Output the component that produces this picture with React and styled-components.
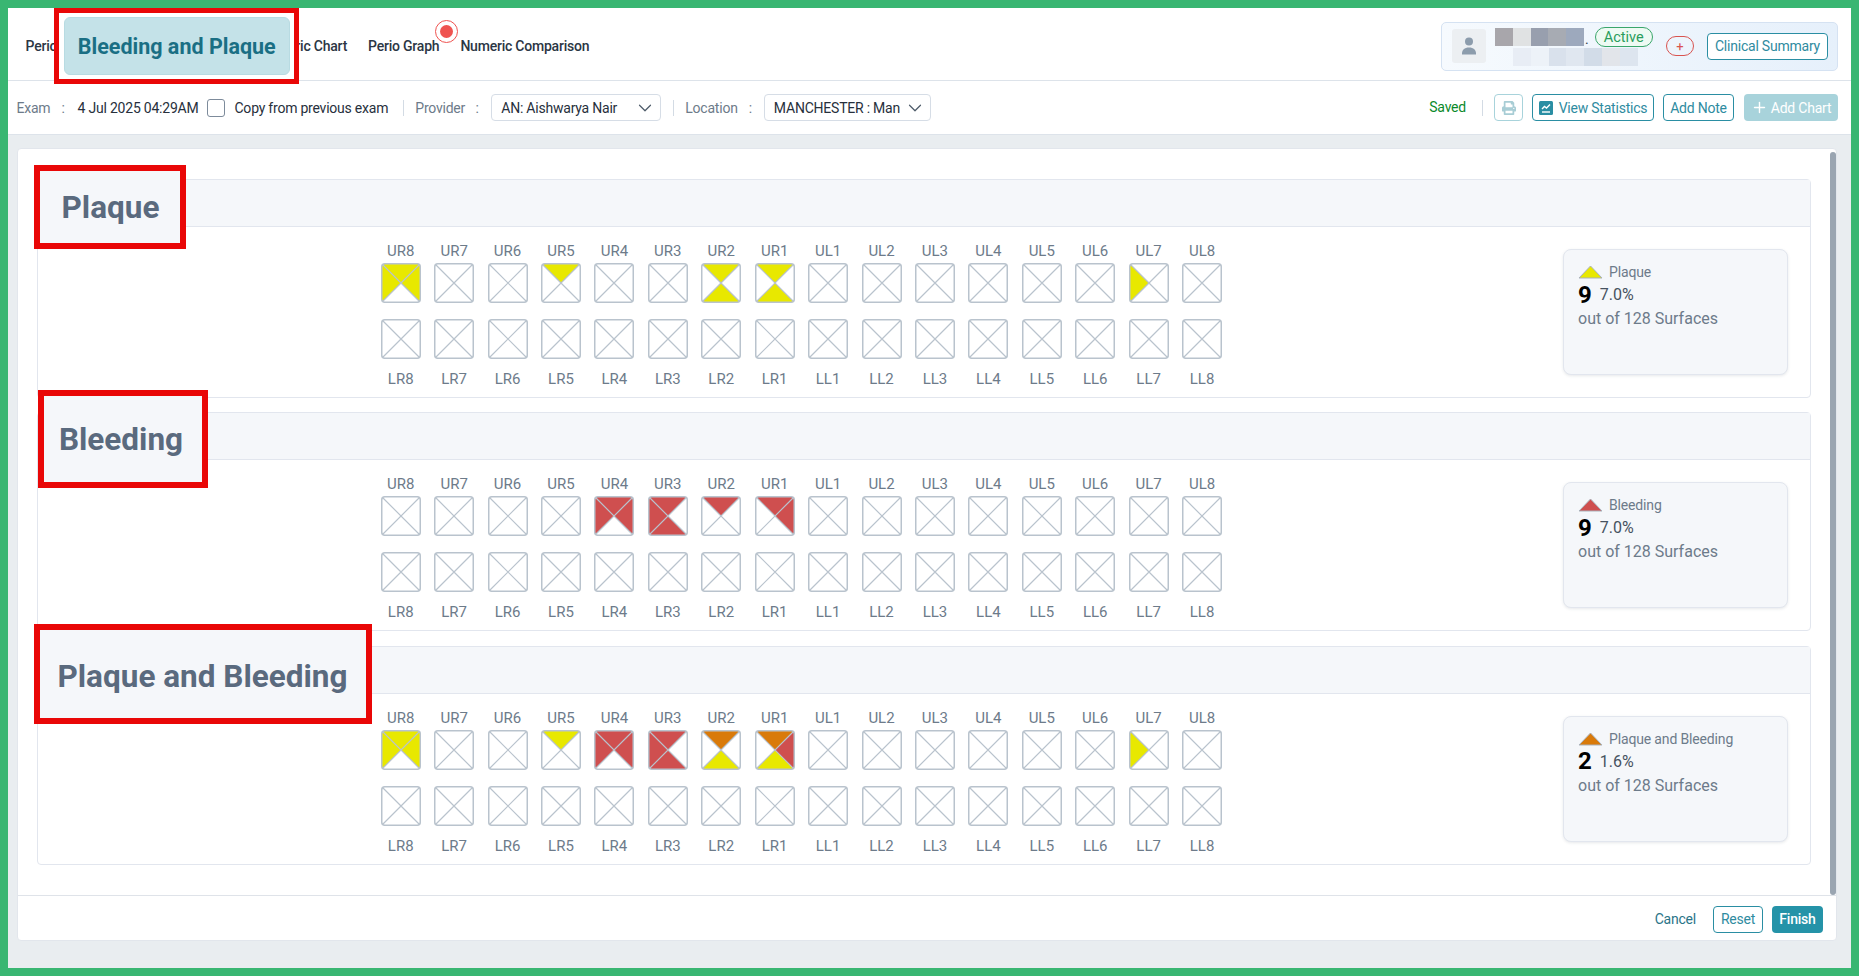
import styled, { createGlobalStyle } from 'styled-components'
import { ChevronDown, Plus } from 'lucide-react'
import { FaPrint } from 'react-icons/fa'

const GlobalStyle = createGlobalStyle`
html, body {
  margin: 0;
  padding: 0;
}
body {
  font-family: Roboto, "Liberation Sans", sans-serif;
  color: #2f3b4a;
}
* {
  box-sizing: border-box;
}
`

const Page = styled.div`
width: 1859px;
height: 976px;
border: 8px solid #39b672;
background: #e9edf0;
display: flex;
flex-direction: column;
position: relative;
overflow: hidden;
`

const Header = styled.header`
height: 73px;
flex-shrink: 0;
background: #fff;
border-bottom: 1px solid #dde3ea;
display: flex;
align-items: center;
justify-content: space-between;
padding: 4px 13px 0 17.5px;
position: relative;
`

const Nav = styled.nav`
display: flex;
align-items: center;
gap: 21px;
`

const NavItem = styled.span`
font-size: 14px;
letter-spacing: -0.22px;
font-weight: 500;
color: #2b3644;
white-space: nowrap;
position: relative;
`

const NavSlot = styled.span`
width: 123px;
`

const RecordDot = styled.span`
position: absolute;
right: -19px;
top: -18px;
width: 23px;
height: 23px;
border-radius: 50%;
border: 1px solid #ef5350;
background: #fff;
display: flex;
align-items: center;
justify-content: center;

&::after {
  content: '';
  width: 13px;
  height: 13px;
  border-radius: 50%;
  background: #ef5350;
}
`

const TabCallout = styled.div`
position: absolute;
left: 46px;
top: 0;
width: 245px;
height: 76px;
border: 5px solid #e90707;
background: #fff;
padding: 4px 4px 4px 4.5px;
z-index: 3;
`

const ActiveTab = styled.div`
height: 100%;
background: #c4e2e8;
border: 1px solid #b8dbe2;
border-radius: 6px;
display: flex;
align-items: center;
justify-content: center;
font-size: 21.5px;
font-weight: 700;
color: #1a6f84;
white-space: nowrap;
`

const PatientBox = styled.div`
width: 397px;
height: 49px;
display: flex;
align-items: center;
padding: 0 9px 0 10px;
border: 1px solid #d5e2f2;
border-radius: 5px;
background: linear-gradient(90deg, #f6fafe, #e6f0fb);
`

const Avatar = styled.div`
width: 34px;
height: 34px;
flex-shrink: 0;
border-radius: 3px;
background: #eceff2;
display: flex;
align-items: center;
justify-content: center;
margin-right: 9px;
`

const PatientInfo = styled.div`
width: 161px;
flex-shrink: 0;
display: flex;
flex-direction: column;
`

const BlurRow = styled.div`
display: flex;
align-items: center;
height: ${p => p.$height}px;
margin-left: ${p => p.$indent}px;
`

const BlurBlock = styled.span`
width: 17.8px;
height: 18px;
flex-shrink: 0;
background: ${p => p.$color};
`

const Dot = styled.span`
font-size: 14px;
margin: 4px 6px 0 1px;
color: #2f3b4a;
`

const ActivePill = styled.span`
height: 20px;
width: 58px;
flex-shrink: 0;
border: 1px solid #3aa66b;
border-radius: 10px;
background: #eefaf3;
color: #2a9d5c;
font-size: 14.5px;
display: flex;
align-items: center;
justify-content: center;
`

const PlusPill = styled.span`
width: 28px;
height: 20px;
flex-shrink: 0;
border: 1px solid #d9534f;
border-radius: 10px;
color: #d9534f;
font-size: 13px;
display: flex;
align-items: center;
justify-content: center;
margin: 0 13px 0 10px;
`

const OutlineButton = styled.button`
font-family: inherit;
font-size: 14px;
letter-spacing: -0.22px;
width: ${p => p.$width}px;
height: 27px;
padding: 0;
margin-left: ${p => p.$left || 0}px;
color: #2f8ba0;
background: #fff;
border: 1px solid #2a8ea3;
border-radius: 4px;
display: inline-flex;
align-items: center;
justify-content: center;
gap: 6px;
white-space: nowrap;
flex-shrink: 0;
`

const Toolbar = styled.div`
height: 54px;
flex-shrink: 0;
background: #fff;
border-bottom: 1px solid #dde3ea;
display: flex;
align-items: center;
padding: 0 13px 0 8.5px;
font-size: 14px;
letter-spacing: -0.22px;
`

const Muted = styled.span`
color: #6d7b8a;
`

const Colon = styled.span`
color: #6d7b8a;
margin: 0 ${p => p.$right}px 0 ${p => p.$left}px;
`

const Value = styled.span`
color: #27303c;
white-space: nowrap;
`

const Checkbox = styled.span`
width: 18px;
height: 18px;
flex-shrink: 0;
margin: 0 9.5px 0 8.5px;
border: 1px solid #7d8b9b;
border-radius: 3px;
background: #fff;
`

const Divider = styled.span`
width: 1px;
height: 16px;
background: #d3dbe4;
margin: 0 ${p => p.$right}px 0 ${p => p.$left}px;
`

const Select = styled.div`
width: ${p => p.$width}px;
height: 27px;
flex-shrink: 0;
border: 1px solid #d6dde6;
border-radius: 4px;
display: flex;
align-items: center;
justify-content: space-between;
padding: 0 4px 0 9px;
color: #27303c;
white-space: nowrap;
`

const Spacer = styled.span`
flex: 1;
`

const Saved = styled.span`
color: #0a8a2a;
font-size: 14px;
margin-top: -2px;
`

const PrintButton = styled.button`
width: 29px;
height: 27px;
padding: 0;
background: #fff;
border: 1px solid #a8d3db;
border-radius: 4px;
display: flex;
align-items: center;
justify-content: center;
margin-right: 9px;
`

const AddChart = styled.button`
font-family: inherit;
font-size: 14px;
letter-spacing: -0.22px;
width: 94px;
height: 27px;
padding: 0;
margin-left: 10px;
color: #fff;
background: #a8d3db;
border: 0;
border-radius: 4px;
display: flex;
align-items: center;
justify-content: center;
gap: 3px;
`

const Main = styled.main`
flex: 1;
min-height: 0;
padding: 13px 14px 27px 9px;
display: flex;
`

const Card = styled.div`
flex: 1;
background: #fff;
border: 1px solid #e2e6ec;
border-radius: 4px;
display: flex;
flex-direction: column;
position: relative;
`

const ScrollArea = styled.div`
flex: 1;
min-height: 0;
padding: 30px 25px 0 18.5px;
`

const Scrollbar = styled.div`
position: absolute;
right: 0;
top: 3px;
bottom: 45px;
width: 6px;
border-radius: 3px;
background: #9aa5b1;
`

const Panel = styled.section`
height: 219px;
margin-bottom: 14.4px;
border: 1px solid #e2e6ee;
border-radius: 4px;
position: relative;
`

const PanelHeader = styled.div`
height: 47px;
background: #f5f7fa;
border-bottom: 1px solid #e2e6ee;
`

const TitleCallout = styled.h2`
position: absolute;
left: ${p => p.$left}px;
top: ${p => p.$top}px;
width: ${p => p.$width}px;
height: ${p => p.$height}px;
margin: 0;
padding: ${p => p.$padding || 0};
border: 6px solid #e90707;
background: #f5f7fa;
display: flex;
align-items: center;
justify-content: center;
font-size: 31.5px;
font-weight: 700;
color: #5a6a7e;
white-space: nowrap;
z-index: 2;
`

const PanelBody = styled.div`
display: flex;
align-items: flex-start;
padding: 0 22px 0 336.5px;
`

const TeethGrid = styled.div`
width: 855px;
padding-top: 15px;
display: grid;
grid-template-columns: repeat(16, 53.43px);
grid-auto-rows: auto;
justify-items: center;
`

const ToothLabel = styled.span`
height: 18px;
line-height: 18px;
font-size: 15px;
color: #6d7b8a;
margin-bottom: ${p => p.$bottom || 0}px;
margin-top: ${p => p.$top || 0}px;
`

const ToothBox = styled.svg`
display: block;
width: 40px;
height: 40px;
margin-bottom: ${p => p.$bottom}px;
`

const StatCard = styled.div`
width: 225px;
height: 126px;
margin: 22px 0 0 auto;
padding: 13px 14px;
background: #f5f7fa;
border: 1px solid #e2e6ee;
border-radius: 8px;
box-shadow: 0 1px 3px rgba(60, 70, 90, 0.12);
`

const StatLegend = styled.div`
display: flex;
align-items: center;
gap: 6px;
font-size: 14px;
letter-spacing: -0.15px;
color: #6d7b8a;
height: 18px;
`

const StatNumbers = styled.div`
display: flex;
align-items: center;
gap: 8px;
height: 27px;
font-size: 16px;
color: #46525f;
`

const StatCount = styled.b`
font-size: 24px;
font-weight: 700;
color: #000;
`

const StatNote = styled.div`
font-size: 16px;
color: #6d7b8a;
margin-top: 1px;
`

const Footer = styled.div`
height: 45px;
flex-shrink: 0;
border-top: 1px solid #dfe3e9;
display: flex;
align-items: center;
justify-content: flex-end;
padding: 2px 13px 0 0;
font-size: 14px;
letter-spacing: -0.22px;
`

const Cancel = styled.span`
color: #2a7488;
margin-right: 17px;
`

const Finish = styled.button`
font-family: inherit;
font-size: 14px;
letter-spacing: -0.22px;
font-weight: 500;
width: 51px;
height: 27px;
padding: 0;
margin-left: 9px;
color: #fff;
background: #2593a8;
border: 0;
border-radius: 4px;
`

const YELLOW = '#e8e800'
const RED = '#cf4f4f'
const ORANGE = '#d97a0a'

const upper = ['UR8', 'UR7', 'UR6', 'UR5', 'UR4', 'UR3', 'UR2', 'UR1', 'UL1', 'UL2', 'UL3', 'UL4', 'UL5', 'UL6', 'UL7', 'UL8']
const lower = upper.map(t => t.replace('U', 'L'))

const sections = [
  {
    title: 'Plaque',
    callout: { left: -4, top: -15, width: 152, height: 84, padding: '1px 0 0 2px' },
    legend: YELLOW,
    count: 9,
    pct: '7.0%',
    marks: {
      UR8: { t: YELLOW, l: YELLOW, r: YELLOW },
      UR5: { t: YELLOW },
      UR2: { t: YELLOW, b: YELLOW },
      UR1: { t: YELLOW, b: YELLOW },
      UL7: { l: YELLOW },
    },
  },
  {
    title: 'Bleeding',
    callout: { left: 0, top: -23, width: 170, height: 98, padding: '0 3px 0 0' },
    legend: RED,
    count: 9,
    pct: '7.0%',
    marks: {
      UR4: { t: RED, l: RED, r: RED },
      UR3: { t: RED, l: RED, b: RED },
      UR2: { t: RED },
      UR1: { t: RED, r: RED },
    },
  },
  {
    title: 'Plaque and Bleeding',
    callout: { left: -4, top: -23, width: 338, height: 100, padding: '5px 0 0 0' },
    legend: ORANGE,
    count: 2,
    pct: '1.6%',
    marks: {
      UR8: { t: YELLOW, l: YELLOW, r: YELLOW },
      UR5: { t: YELLOW },
      UR4: { t: RED, l: RED, r: RED },
      UR3: { t: RED, l: RED, b: RED },
      UR2: { t: ORANGE, b: YELLOW },
      UR1: { t: ORANGE, r: RED, b: YELLOW },
      UL7: { l: YELLOW },
    },
  },
]

const Tooth = ({ marks = {}, bottom }) => (
  <ToothBox viewBox="0 0 40 40" $bottom={bottom}>
    <rect x="0.75" y="0.75" width="38.5" height="38.5" rx="3" fill="#fff" />
    {marks.t && <polygon points="1,1 39,1 20,20" fill={marks.t} />}
    {marks.r && <polygon points="39,1 39,39 20,20" fill={marks.r} />}
    {marks.b && <polygon points="1,39 39,39 20,20" fill={marks.b} />}
    {marks.l && <polygon points="1,1 1,39 20,20" fill={marks.l} />}
    <path d="M1.5 1.5 38.5 38.5 M38.5 1.5 1.5 38.5" stroke="#b9c3cd" strokeWidth="1.2" />
    <rect x="0.75" y="0.75" width="38.5" height="38.5" rx="3" fill="none" stroke="#b9c3cd" strokeWidth="1.5" />
  </ToothBox>
)

const Section = ({ section }) => (
  <Panel>
    <PanelHeader>
      <TitleCallout
        $left={section.callout.left}
        $top={section.callout.top}
        $width={section.callout.width}
        $height={section.callout.height}
        $padding={section.callout.padding}
      >
        {section.title}
      </TitleCallout>
    </PanelHeader>
    <PanelBody>
      <TeethGrid>
        {upper.map(t => <ToothLabel key={t} $bottom={3}>{t}</ToothLabel>)}
        {upper.map(t => <Tooth key={t} marks={section.marks[t]} bottom={16} />)}
        {lower.map(t => <Tooth key={t} bottom={10} />)}
        {lower.map(t => <ToothLabel key={t} $top={1}>{t}</ToothLabel>)}
      </TeethGrid>
      <StatCard>
        <StatLegend>
          <svg width="25" height="14" viewBox="0 0 25 14">
            <polygon points="12.5,1 24,13 1,13" fill={section.legend} stroke="#a9b1ba" strokeWidth="1" />
          </svg>
          {section.title}
        </StatLegend>
        <StatNumbers>
          <StatCount>{section.count}</StatCount>
          {section.pct}
        </StatNumbers>
        <StatNote>out of 128 Surfaces</StatNote>
      </StatCard>
    </PanelBody>
  </Panel>
)

const topBlur = ['#a8a6ab', '#e0e2e3', '#989fae', '#a7abb3', '#9da9bd']
const bottomBlur = ['#e8edf5', '#edf2f8', '#d9e1ec', '#e0e7f0', '#d2dce8', '#e2e5ea', '#dde5ef']

const App = () => (
  <Page>
    <GlobalStyle />
    <Header>
      <Nav>
        <NavItem>Perio Chart</NavItem>
        <NavSlot />
        <NavItem>Numeric Chart</NavItem>
        <NavItem>
          Perio Graph
          <RecordDot />
        </NavItem>
        <NavItem>Numeric Comparison</NavItem>
      </Nav>
      <TabCallout>
        <ActiveTab>Bleeding and Plaque</ActiveTab>
      </TabCallout>
      <PatientBox>
        <Avatar>
          <svg width="16" height="18" viewBox="0 0 16 18">
            <circle cx="8" cy="4.6" r="4" fill="#8c9cac" />
            <path d="M1 17.5c-.4-4.5 2.6-7 7-7s7.400 2.500 7 7z" fill="#8c9cac" />
          </svg>
        </Avatar>
        <PatientInfo>
          <BlurRow $height={21} $indent={0}>
            {topBlur.map(c => <BlurBlock key={c} $color={c} />)}
            <Dot>.</Dot>
            <ActivePill>Active</ActivePill>
          </BlurRow>
          <BlurRow $height={18} $indent={18}>
            {bottomBlur.map(c => <BlurBlock key={c} $color={c} />)}
          </BlurRow>
        </PatientInfo>
        <PlusPill>+</PlusPill>
        <OutlineButton $width={121}>Clinical Summary</OutlineButton>
      </PatientBox>
    </Header>
    <Toolbar>
      <Muted>Exam</Muted>
      <Colon $left={11} $right={13}>:</Colon>
      <Value>4 Jul 2025 04:29AM</Value>
      <Checkbox />
      <Value>Copy from previous exam</Value>
      <Divider $left={15} $right={11} />
      <Muted>Provider</Muted>
      <Colon $left={10.5} $right={12.5}>:</Colon>
      <Select $width={170}>
        AN: Aishwarya Nair
        <ChevronDown size={22} strokeWidth={1.3} color="#4c5a68" />
      </Select>
      <Divider $left={11.5} $right={11.5} />
      <Muted>Location</Muted>
      <Colon $left={11} $right={12}>:</Colon>
      <Select $width={167}>
        MANCHESTER : Man
        <ChevronDown size={22} strokeWidth={1.3} color="#4c5a68" />
      </Select>
      <Spacer />
      <Saved>Saved</Saved>
      <Divider $left={16} $right={11} />
      <PrintButton>
        <FaPrint size={14} color="#a8cdd5" />
      </PrintButton>
      <OutlineButton $width={122}>
        <svg width="14" height="14" viewBox="0 0 14 14">
          <rect width="14" height="14" rx="1.500" fill="#2a8ea3" />
          <path d="M3 8 5.500 5.500 7.500 7 11 3.500" stroke="#fff" strokeWidth="1.400" fill="none" />
          <path d="M3 11h8" stroke="#fff" strokeWidth="1.400" />
        </svg>
        View Statistics
      </OutlineButton>
      <OutlineButton $width={71} $left={9}>Add Note</OutlineButton>
      <AddChart>
        <Plus size={17} />
        Add Chart
      </AddChart>
    </Toolbar>
    <Main>
      <Card>
        <ScrollArea>
          {sections.map(s => <Section key={s.title} section={s} />)}
        </ScrollArea>
        <Scrollbar />
        <Footer>
          <Cancel>Cancel</Cancel>
          <OutlineButton $width={50}>Reset</OutlineButton>
          <Finish>Finish</Finish>
        </Footer>
      </Card>
    </Main>
  </Page>
)

export default App
